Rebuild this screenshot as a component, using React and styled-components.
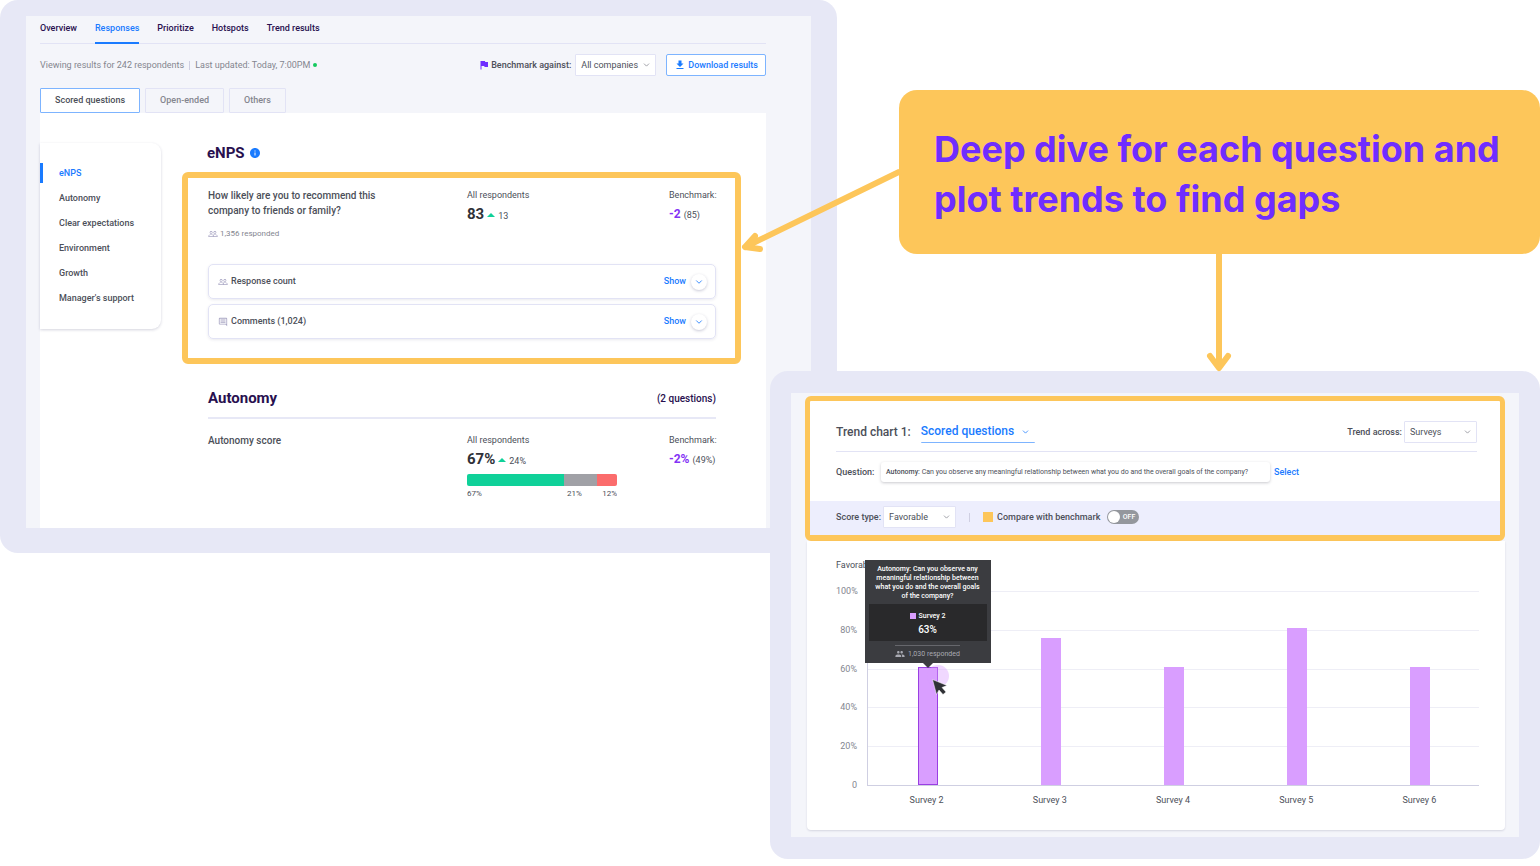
import { useState } from 'react'
import styled, { createGlobalStyle, ThemeProvider } from 'styled-components'
import { MdFlag, MdDownload, MdPeople, MdPeopleOutline, MdOutlineComment, MdInfo } from 'react-icons/md'
import { ChevronDown } from 'lucide-react'

const theme = {
    colors: {
        frame: `#e7e8f6`,
        screen: `#f4f5fa`,
        white: `#ffffff`,
        accent: `#fdc65a`,
        callout_text: `#6f2dff`,
        primary: `#1a7bff`,
        primary_border: `#7db4ff`,
        heading: `#28104f`,
        text: `#4c4f59`,
        text_dark: `#2f3138`,
        text_muted: `#84868f`,
        border: `#e2e3f5`,
        icon: `#a9a6c4`,
        benchmark: `#8433f5`,
        positive: `#0fd199`,
        neutral: `#a0a1a6`,
        negative: `#fb6c6c`,
        bar: `#d99eff`,
        bar_active: `#9a3fe2`,
        tooltip: `#3b3c40`,
        tooltip_inner: `#29292b`,
        band: `#edeefd`,
        axis: `#cfcfe2`,
        toggle: `#94979d`
    }
}

const GlobalStyle = createGlobalStyle`
    *, *::before, *::after {
        box-sizing: border-box;
    }

    body {
        margin: 0;
        background: #ffffff;
        font-family: Roboto, "Liberation Sans", sans-serif;
        font-size: 9px;
        line-height: 15px;
    }

    h2, h3, p {
        margin: 0;
    }

    button, select, input {
        margin: 0;
        font: inherit;
        color: inherit;
    }

    button {
        cursor: pointer;
    }

    svg {
        display: block;
        flex: none;
    }
`

/* Page */

const Board = styled.main`
    display: grid;
    grid-template-columns: minmax(0, 770fr) minmax(0, 67fr) minmax(0, 62fr) minmax(0, 641fr);
    grid-template-rows: 371px 182px auto;
    color: ${ ( { theme } ) => theme.colors.text };
`

const Frame = styled.section`
    display: flex;
    background: ${ ( { theme } ) => theme.colors.frame };
    border-radius: 18px;
`

const ResponsesFrame = styled( Frame )`
    grid-column: 1 / 3;
    grid-row: 1 / 3;
    padding: 16px 26px 25px;
`

const TrendFrame = styled( Frame )`
    grid-column: 2 / 5;
    grid-row: 2 / 4;
    padding: 22px 21px;
    z-index: 1;
`

const Screen = styled.div`
    flex: 1;
    min-width: 0;
    display: flex;
    flex-direction: column;
    background: ${ ( { theme } ) => theme.colors.screen };
`

const ResponsesScreen = styled( Screen )`
    padding: 0 45px 0 14px;
`

const TrendScreen = styled( Screen )`
    padding: 3px 14px 7px;
`

/* Callout */

const Callout = styled.aside`
    position: relative;
    grid-column: 4;
    grid-row: 1;
    align-self: start;
    margin-top: 90px;
    padding: 34px 35px 30px;
    background: ${ ( { theme } ) => theme.colors.accent };
    border-radius: 18px;
    color: ${ ( { theme } ) => theme.colors.callout_text };
    font-family: Inter, sans-serif;
    font-size: 36px;
    font-weight: 700;
    line-height: 50px;
    z-index: 2;
`

const Arrow = styled.svg`
    position: absolute;
    fill: none;
    stroke: ${ ( { theme } ) => theme.colors.accent };
    stroke-width: 6;
    stroke-linecap: round;
    stroke-linejoin: round;
`

const ArrowLeft = styled( Arrow )`
    right: 100%;
    top: 76px;
`

const ArrowDown = styled( Arrow )`
    left: calc(50% - 15px);
    top: 100%;
`

/* Shared controls */

const SelectBox = styled.span`
    position: relative;
    display: inline-flex;

    svg {
        position: absolute;
        right: 5px;
        top: 50%;
        transform: translateY(-50%);
        pointer-events: none;
        color: ${ ( { theme, $primary } ) => $primary ? theme.colors.primary : theme.colors.text_muted };
    }
`

const SelectField = styled.select`
    appearance: none;
    width: ${ ( { $width } ) => $width }px;
    height: 22px;
    padding: 0 15px 0 5px;
    border: 1px solid ${ ( { theme } ) => theme.colors.border };
    border-radius: 1px;
    background: ${ ( { theme } ) => theme.colors.white };
`

const TitleSelect = styled( SelectField )`
    padding: 0;
    border: 0;
    border-bottom: 1px solid ${ ( { theme } ) => theme.colors.primary_border };
    color: ${ ( { theme } ) => theme.colors.primary };
    font-size: 12px;
    font-weight: 500;
`

const Strong = styled.span`
    font-weight: 500;
`

/* Responses screen */

const Nav = styled.nav`
    display: flex;
    gap: 18px;
    height: 28px;
    border-bottom: 1px solid ${ ( { theme } ) => theme.colors.border };
`

const NavLink = styled.a`
    height: 28px;
    padding-top: 5px;
    border-bottom: 2px solid ${ ( { theme, $active } ) => $active ? theme.colors.primary : `transparent` };
    color: ${ ( { theme, $active } ) => $active ? theme.colors.primary : theme.colors.heading };
    font-weight: 500;
    text-decoration: none;
    white-space: nowrap;
`

const Toolbar = styled.div`
    display: flex;
    align-items: center;
    justify-content: space-between;
    margin: 10px 0 12px;
`

const ToolbarGroup = styled.div`
    display: flex;
    align-items: center;
    gap: 4px;
    white-space: nowrap;
`

const Meta = styled( ToolbarGroup )`
    gap: 5px;
    color: ${ ( { theme } ) => theme.colors.text_muted };
`

const Divider = styled.span`
    width: 1px;
    height: 9px;
    background: ${ ( { theme } ) => theme.colors.axis };
`

const LiveDot = styled.span`
    width: 4px;
    height: 4px;
    margin-left: -2px;
    border-radius: 50%;
    background: #14c95e;
`

const BenchmarkLabel = styled( Strong )`
    display: flex;
    align-items: center;
    gap: 1px;

    svg {
        color: ${ ( { theme } ) => theme.colors.callout_text };
    }
`

const DownloadButton = styled.button`
    display: flex;
    align-items: center;
    gap: 2px;
    height: 22px;
    margin-left: 6px;
    padding: 0 7px;
    border: 1px solid ${ ( { theme } ) => theme.colors.primary_border };
    border-radius: 2px;
    background: ${ ( { theme } ) => theme.colors.white };
    color: ${ ( { theme } ) => theme.colors.primary };
    font-weight: 500;
`

const Tabs = styled.div`
    display: flex;
    gap: 5px;
`

const Tab = styled.button`
    height: 25px;
    padding: 0 14px;
    border: 1px solid ${ ( { theme, $active } ) => $active ? theme.colors.primary_border : theme.colors.border };
    border-radius: 1px;
    background: ${ ( { theme, $active } ) => $active ? theme.colors.white : `transparent` };
    color: ${ ( { theme, $active } ) => $active ? theme.colors.text : theme.colors.text_muted };
    font-weight: 500;
`

const Body = styled.div`
    flex: 1;
    display: flex;
    gap: 21px;
    padding-right: 25px;
    background: ${ ( { theme } ) => theme.colors.white };
`

const SideMenu = styled.nav`
    flex: none;
    align-self: flex-start;
    display: flex;
    flex-direction: column;
    gap: 5px;
    width: 121px;
    margin-top: 30px;
    padding: 20px 0 21px;
    border-radius: 0 9px 9px 0;
    box-shadow: 0 1px 3px rgba(40, 40, 90, 0.2);
`

const SideLink = styled.a`
    padding: 3px 0 2px 16px;
    border-left: 3px solid ${ ( { theme, $active } ) => $active ? theme.colors.primary : `transparent` };
    color: ${ ( { theme, $active } ) => $active ? theme.colors.primary : theme.colors.text };
    font-weight: 500;
    text-decoration: none;
`

const Content = styled.div`
    flex: 1;
    min-width: 0;
    display: flex;
    flex-direction: column;
    padding-top: 30px;
`

const Heading = styled.h2`
    display: flex;
    align-items: center;
    gap: 4px;
    padding: 0 25px;
    color: ${ ( { theme } ) => theme.colors.heading };
    font-size: 15px;
    font-weight: 700;
    line-height: 20px;

    svg {
        color: ${ ( { theme } ) => theme.colors.primary };
    }
`

const Highlight = styled.div`
    border: 6px solid ${ ( { theme } ) => theme.colors.accent };
    border-radius: 6px;
    background: ${ ( { theme } ) => theme.colors.white };
`

const QuestionCard = styled( Highlight )`
    margin: 9px 0 24px;
    padding: 10px 19px 19px 20px;
`

const ScoreRow = styled.div`
    display: grid;
    grid-template-columns: minmax(0, 259fr) minmax(0, 202fr) 47px;
    white-space: nowrap;
`

const Question = styled.h3`
    max-width: 190px;
    font-size: 10px;
    font-weight: 500;
    line-height: 15px;
    white-space: normal;
`

const Responded = styled.p`
    display: flex;
    align-items: center;
    gap: 2px;
    margin-top: 8px;
    color: ${ ( { theme } ) => theme.colors.text_muted };
    font-size: 8px;

    svg {
        color: ${ ( { theme } ) => theme.colors.icon };
    }
`

const Score = styled.p`
    display: flex;
    align-items: baseline;
    gap: 3px;
    margin-top: 1px;
    line-height: 20px;
`

const ScoreValue = styled.strong`
    font-size: 15px;
    font-weight: 700;
    color: ${ ( { theme } ) => theme.colors.text_dark };
`

const BenchmarkValue = styled.strong`
    font-size: 12px;
    font-weight: 700;
    color: ${ ( { theme } ) => theme.colors.benchmark };
`

const Up = styled.span`
    align-self: center;
    border: 4px solid transparent;
    border-top: 0;
    border-bottom: 4px solid ${ ( { theme } ) => theme.colors.positive };
`

const Expanders = styled.div`
    display: flex;
    flex-direction: column;
    gap: 5px;
    margin-top: 23px;
`

const Expander = styled.div`
    display: flex;
    align-items: center;
    gap: 3px;
    height: 35px;
    padding: 0 8px 0 9px;
    border: 1px solid ${ ( { theme } ) => theme.colors.border };
    border-radius: 5px;
    box-shadow: 0 1px 3px rgba(40, 40, 90, 0.1);
    font-weight: 500;

    > svg {
        color: ${ ( { theme } ) => theme.colors.icon };
    }
`

const ShowButton = styled.button`
    display: flex;
    align-items: center;
    gap: 5px;
    margin-left: auto;
    padding: 0;
    border: 0;
    background: none;
    color: ${ ( { theme } ) => theme.colors.primary };
    font-weight: 500;
`

const RoundIcon = styled.span`
    display: grid;
    place-items: center;
    width: 16px;
    height: 16px;
    border-radius: 50%;
    box-shadow: 0 1px 3px rgba(40, 40, 90, 0.25);
`

const SectionHead = styled.div`
    display: flex;
    align-items: center;
    justify-content: space-between;
    margin: 0 25px 14px 26px;
    padding-bottom: 9px;
    border-bottom: 2px solid ${ ( { theme } ) => theme.colors.frame };
    color: ${ ( { theme } ) => theme.colors.heading };
    font-size: 10px;
    font-weight: 500;

    ${ Heading } {
        padding: 0;
    }
`

const SectionScore = styled( ScoreRow )`
    margin: 0 25px 0 26px;
`

const Split = styled.div`
    width: 150px;
    margin-top: 3px;
    font-size: 8px;
    line-height: 16px;
`

const SplitRow = styled.div`
    display: grid;
    grid-template-columns: 97fr 33fr 20fr;
    overflow: hidden;
    border-radius: 2px;
`

const SplitLabel = styled.span`
    padding-left: ${ ( { $indent } ) => $indent ? 3 : 0 }px;
    text-align: ${ ( { $align } ) => $align || `left` };
`

const Segment = styled.span`
    height: 12px;
    background: ${ ( { theme, $tone } ) => theme.colors[ $tone ] };
`

/* Trend screen */

const TrendHeader = styled( Highlight )`
    border-width: 5px 5px 6px;
`

const TrendTop = styled.div`
    padding: 20px 23px 19px 26px;
`

const TrendTitleRow = styled.div`
    display: flex;
    align-items: center;
    justify-content: space-between;
    padding-bottom: 8px;
    border-bottom: 1px solid ${ ( { theme } ) => theme.colors.border };
`

const TrendTitle = styled.h2`
    display: flex;
    align-items: center;
    gap: 10px;
    font-size: 12px;
    font-weight: 500;
`

const InlineField = styled.label`
    display: flex;
    align-items: center;
    gap: 2px;
    font-weight: 500;

    select {
        font-weight: 400;
    }
`

const QuestionRow = styled.div`
    display: flex;
    align-items: center;
    margin-top: 10px;
    white-space: nowrap;
`

const QuestionLabel = styled( Strong )`
    width: 45px;
`

const QuestionBox = styled.p`
    min-width: 389px;
    padding: 3px 5px;
    border-radius: 3px;
    box-shadow: 0 1px 3px rgba(40, 40, 60, 0.25);
    font-size: 7px;
    line-height: 14px;
`

const LinkButton = styled.button`
    margin-left: 4px;
    padding: 0;
    border: 0;
    background: none;
    color: ${ ( { theme } ) => theme.colors.primary };
    font-weight: 500;
`

const OptionsBand = styled.div`
    display: flex;
    align-items: center;
    gap: 13px;
    height: 34px;
    padding: 0 26px 2px;
    background: ${ ( { theme } ) => theme.colors.band };
`

const CompareField = styled( InlineField )`
    gap: 4px;
`

const Swatch = styled.span`
    width: ${ ( { $size } ) => $size }px;
    height: ${ ( { $size } ) => $size }px;
    background: ${ ( { theme, $tone } ) => theme.colors[ $tone ] };
`

const Toggle = styled.span`
    display: flex;
    align-items: center;
    justify-content: space-between;
    flex-direction: ${ ( { $on } ) => $on ? `row-reverse` : `row` };
    width: 32px;
    height: 14px;
    margin-left: 3px;
    padding: 0 4px 0 1px;
    border-radius: 7px;
    background: ${ ( { theme, $on } ) => $on ? theme.colors.primary : theme.colors.toggle };
    color: ${ ( { theme } ) => theme.colors.white };
    font-size: 7px;

    input {
        appearance: none;
        width: 12px;
        height: 12px;
        border-radius: 50%;
        background: ${ ( { theme } ) => theme.colors.white };
    }
`

const ChartCard = styled.div`
    margin-left: 2px;
    padding: 17px 26px 22px 29px;
    border-radius: 0 0 4px 4px;
    background: ${ ( { theme } ) => theme.colors.white };
    box-shadow: 0 1px 2px rgba(40, 40, 90, 0.15);
`

const Chart = styled.div`
    display: grid;
    grid-template-columns: 21px minmax(0, 1fr);
    column-gap: 10px;
    margin-top: 11px;
`

const YAxis = styled.div`
    display: flex;
    flex-direction: column;
    justify-content: space-between;
    height: 209px;
    color: ${ ( { theme } ) => theme.colors.text_muted };
    text-align: right;
`

const Plot = styled.div`
    display: grid;
    height: 195px;
    margin-top: 7px;
    border-left: 1px solid ${ ( { theme } ) => theme.colors.axis };
    border-bottom: 1px solid ${ ( { theme } ) => theme.colors.axis };
`

const GridLines = styled.div`
    grid-area: 1 / 1;
    display: flex;
    flex-direction: column;
`

const GridLine = styled.span`
    flex: 1;
    border-top: 1px solid #eeeef6;
`

const Bars = styled.div`
    grid-area: 1 / 1;
    display: grid;
    grid-template-columns: repeat(5, minmax(0, 1fr));
    align-items: end;
    justify-items: center;
    margin: 0 -2px;
`

const Bar = styled.div`
    position: relative;
    width: 20px;
    background: ${ ( { theme } ) => theme.colors.bar };
    border: ${ ( { theme, $active } ) => $active ? `1px solid ${ theme.colors.bar_active }` : `0` };
`

const XAxis = styled.div`
    grid-column: 2;
    display: grid;
    grid-template-columns: repeat(5, minmax(0, 1fr));
    margin: 0 -2px;
    text-align: center;
`

const Tooltip = styled.div`
    position: absolute;
    left: 50%;
    bottom: calc(100% + 5px);
    display: flex;
    flex-direction: column;
    align-items: center;
    width: 126px;
    padding: 5px 7px 3px;
    background: ${ ( { theme } ) => theme.colors.tooltip };
    color: ${ ( { theme } ) => theme.colors.white };
    font-size: 7px;
    line-height: 9px;
    text-align: center;
    transform: translateX(-50%);
    z-index: 1;

    &::after {
        content: "";
        position: absolute;
        top: 100%;
        border: 5px solid transparent;
        border-top-color: ${ ( { theme } ) => theme.colors.tooltip };
        border-bottom: 0;
    }
`

const TooltipScore = styled.div`
    display: flex;
    flex-direction: column;
    align-items: center;
    align-self: stretch;
    gap: 2px;
    margin: 3px -3px 4px;
    padding: 8px 0 4px;
    background: ${ ( { theme } ) => theme.colors.tooltip_inner };
`

const TooltipName = styled.span`
    display: flex;
    align-items: center;
    gap: 3px;
`

const TooltipValue = styled( Strong )`
    font-size: 10px;
    line-height: 14px;
`

const TooltipFoot = styled.span`
    display: flex;
    align-items: center;
    gap: 3px;
    padding-top: 3px;
    border-top: 1px solid #66676c;
    color: #a9aab2;
    line-height: 11px;
`

const Pointer = styled.svg`
    position: absolute;
    left: 7px;
    top: -4px;
`

const nav_items = [ `Overview`, `Responses`, `Prioritize`, `Hotspots`, `Trend results` ]
const question_tabs = [ `Scored questions`, `Open-ended`, `Others` ]
const categories = [ `eNPS`, `Autonomy`, `Clear expectations`, `Environment`, `Growth`, `Manager's support` ]
const ticks = [ `100%`, `80%`, `60%`, `40%`, `20%`, `0` ]

const surveys = [
    { name: `Survey 2`, height: 61, active: true },
    { name: `Survey 3`, height: 76 },
    { name: `Survey 4`, height: 61 },
    { name: `Survey 5`, height: 81 },
    { name: `Survey 6`, height: 61 }
]

function Dropdown( { as_title, label, options, width } ) {

    const Field = as_title ? TitleSelect : SelectField

    return <SelectBox $primary={ as_title }>
        <Field aria-label={ label } $width={ width }>
            { options.map( option => <option key={ option }>{ option }</option> ) }
        </Field>
        <ChevronDown size={ 9 } strokeWidth={ 2 } />
    </SelectBox>

}

function ScoreCell( { value, change, children } ) {

    return <div>
        <p>All respondents</p>
        <Score>
            <ScoreValue>{ value }</ScoreValue>
            <Up />
            { change }
        </Score>
        { children }
    </div>

}

function BenchmarkCell( { value, base } ) {

    return <div>
        <p>Benchmark:</p>
        <Score>
            <BenchmarkValue>{ value }</BenchmarkValue>
            ({ base })
        </Score>
    </div>

}

function ExpanderRow( { icon: Icon, title } ) {

    return <Expander>
        <Icon size={ 10 } />
        { title }
        <ShowButton type="button">
            Show
            <RoundIcon><ChevronDown size={ 10 } /></RoundIcon>
        </ShowButton>
    </Expander>

}

function BarTooltip() {

    return <Tooltip role="tooltip">
        <Strong>Autonomy: Can you observe any meaningful relationship between what you do and the overall goals of the company?</Strong>
        <TooltipScore>
            <TooltipName><Swatch $size={ 6 } $tone="bar" /><Strong>Survey 2</Strong></TooltipName>
            <TooltipValue>63%</TooltipValue>
        </TooltipScore>
        <TooltipFoot><MdPeople size={ 10 } />1,030 responded</TooltipFoot>
    </Tooltip>

}

function Responses() {

    const [ tab, set_tab ] = useState( question_tabs[ 0 ] )

    return <ResponsesFrame>
        <ResponsesScreen>

            <Nav>
                { nav_items.map( item => <NavLink key={ item } href="#" $active={ item === `Responses` }>{ item }</NavLink> ) }
            </Nav>

            <Toolbar>
                <Meta>
                    <span>Viewing results for 242 respondents</span>
                    <Divider />
                    <span>Last updated: Today, 7:00PM</span>
                    <LiveDot />
                </Meta>
                <ToolbarGroup>
                    <BenchmarkLabel><MdFlag size={ 12 } />Benchmark against:</BenchmarkLabel>
                    <Dropdown label="Benchmark against" options={ [ `All companies` ] } width={ 81 } />
                    <DownloadButton type="button"><MdDownload size={ 12 } />Download results</DownloadButton>
                </ToolbarGroup>
            </Toolbar>

            <Tabs>
                { question_tabs.map( name => <Tab key={ name } type="button" $active={ name === tab } onClick={ () => set_tab( name ) }>{ name }</Tab> ) }
            </Tabs>

            <Body>
                <SideMenu>
                    { categories.map( name => <SideLink key={ name } href="#" $active={ name === `eNPS` }>{ name }</SideLink> ) }
                </SideMenu>

                <Content>
                    <Heading>eNPS <MdInfo size={ 12 } /></Heading>

                    <QuestionCard>
                        <ScoreRow>
                            <div>
                                <Question>How likely are you to recommend this company to friends or family?</Question>
                                <Responded><MdPeopleOutline size={ 10 } />1,356 responded</Responded>
                            </div>
                            <ScoreCell value="83" change="13" />
                            <BenchmarkCell value="-2" base="85" />
                        </ScoreRow>
                        <Expanders>
                            <ExpanderRow icon={ MdPeopleOutline } title="Response count" />
                            <ExpanderRow icon={ MdOutlineComment } title="Comments (1,024)" />
                        </Expanders>
                    </QuestionCard>

                    <SectionHead>
                        <Heading>Autonomy</Heading>
                        (2 questions)
                    </SectionHead>
                    <SectionScore>
                        <Question>Autonomy score</Question>
                        <ScoreCell value="67%" change="24%">
                            <Split>
                                <SplitRow>
                                    <Segment $tone="positive" />
                                    <Segment $tone="neutral" />
                                    <Segment $tone="negative" />
                                </SplitRow>
                                <SplitRow>
                                    <SplitLabel>67%</SplitLabel>
                                    <SplitLabel $indent>21%</SplitLabel>
                                    <SplitLabel $align="right">12%</SplitLabel>
                                </SplitRow>
                            </Split>
                        </ScoreCell>
                        <BenchmarkCell value="-2%" base="49%" />
                    </SectionScore>
                </Content>
            </Body>

        </ResponsesScreen>
    </ResponsesFrame>

}

function Trend() {

    const [ compare, set_compare ] = useState( false )

    return <TrendFrame>
        <TrendScreen>

            <TrendHeader>
                <TrendTop>
                    <TrendTitleRow>
                        <TrendTitle>
                            Trend chart 1:
                            <Dropdown as_title label="Trend chart 1" options={ [ `Scored questions` ] } width={ 114 } />
                        </TrendTitle>
                        <InlineField>
                            Trend across:
                            <Dropdown label="Trend across" options={ [ `Surveys` ] } width={ 73 } />
                        </InlineField>
                    </TrendTitleRow>
                    <QuestionRow>
                        <QuestionLabel>Question:</QuestionLabel>
                        <QuestionBox>
                            <Strong>Autonomy: </Strong>
                            Can you observe any meaningful relationship between what you do and the overall goals of the company?
                        </QuestionBox>
                        <LinkButton type="button">Select</LinkButton>
                    </QuestionRow>
                </TrendTop>
                <OptionsBand>
                    <InlineField>
                        Score type:
                        <Dropdown label="Score type" options={ [ `Favorable` ] } width={ 73 } />
                    </InlineField>
                    <Divider />
                    <CompareField>
                        <Swatch $size={ 10 } $tone="accent" />
                        Compare with benchmark
                        <Toggle $on={ compare }>
                            <input type="checkbox" role="switch" checked={ compare } onChange={ e => set_compare( e.target.checked ) } />
                            { compare ? `ON` : `OFF` }
                        </Toggle>
                    </CompareField>
                </OptionsBand>
            </TrendHeader>

            <ChartCard>
                <p>Favorable</p>
                <Chart>
                    <YAxis>
                        { ticks.map( tick => <span key={ tick }>{ tick }</span> ) }
                    </YAxis>
                    <Plot>
                        <GridLines>
                            { ticks.slice( 1 ).map( tick => <GridLine key={ tick } /> ) }
                        </GridLines>
                        <Bars>
                            { surveys.map( ( { name, height, active } ) => <Bar key={ name } $active={ active } style={ { height: `${ height }%` } }>
                                { active && <BarTooltip /> }
                                { active && <Pointer width="28" height="34" viewBox="0 0 28 34" aria-hidden="true">
                                    <circle cx="12" cy="12" r="11" fill="#d99eff" fillOpacity="0.4" />
                                    <path d="M6.500 15.500L21 21.500L16 23.500L20 28L17 30.500L13 26L10.500 30.500Z" fill="#303136" stroke="#ffffff" strokeWidth="0.500" />
                                </Pointer> }
                            </Bar> ) }
                        </Bars>
                    </Plot>
                    <XAxis>
                        { surveys.map( ( { name } ) => <span key={ name }>{ name }</span> ) }
                    </XAxis>
                </Chart>
            </ChartCard>

        </TrendScreen>
    </TrendFrame>

}

export default function App() {

    return <ThemeProvider theme={ theme }>
        <GlobalStyle />
        <Board>
            <Responses />
            <Callout>
                Deep dive for each question and plot trends to find gaps
                <ArrowLeft width="160" height="90" viewBox="0 0 160 90" aria-hidden="true">
                    <path d="M160 6L6 81M16 70L6 81L21 83" />
                </ArrowLeft>
                <ArrowDown width="28" height="119" viewBox="0 0 28 119" aria-hidden="true">
                    <path d="M14 0V113M5 102L14 114L23 102" />
                </ArrowDown>
            </Callout>
            <Trend />
        </Board>
    </ThemeProvider>

}
